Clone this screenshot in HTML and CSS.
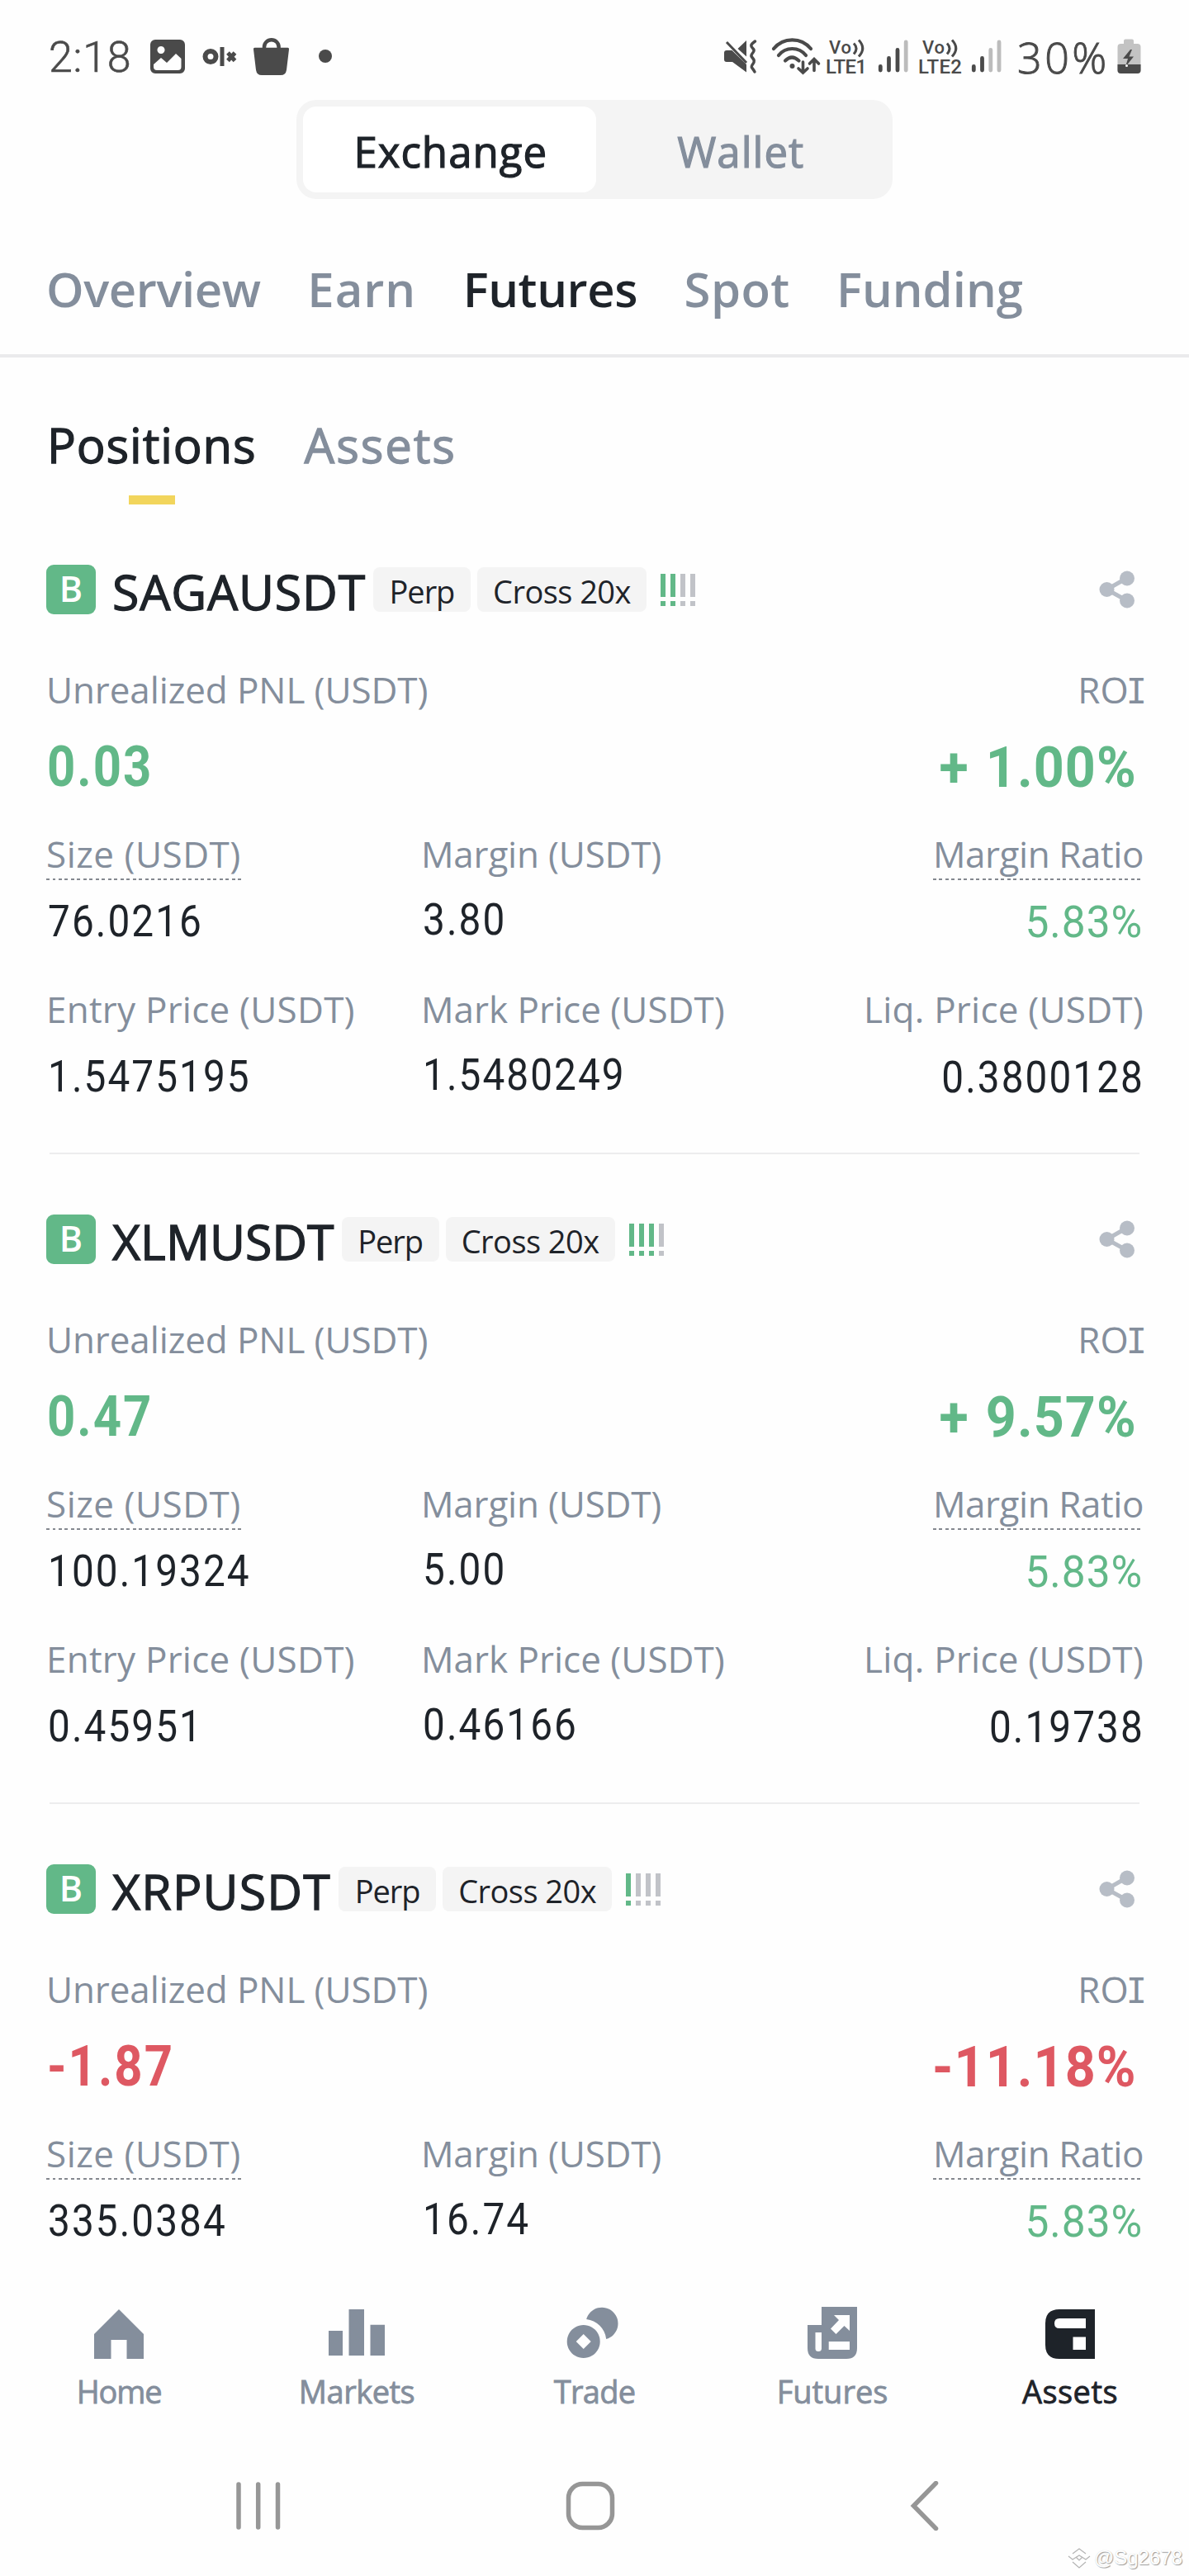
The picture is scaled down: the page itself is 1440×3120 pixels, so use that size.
FILE: index.html
```html
<!DOCTYPE html>
<html lang="en">
<head>
<meta charset="utf-8">
<title>Futures positions</title>
<link rel="stylesheet" href="styles.css">
</head>
<body>
<svg class="defs" aria-hidden="true">
  <symbol id="share" viewBox="0 0 44 46">
    <path d="M34 9L9.500 23L34 36.500" fill="none" stroke="#b7bdc6" stroke-width="5"/>
    <circle cx="9.500" cy="23" r="9"/><circle cx="34" cy="9.500" r="9"/><circle cx="34" cy="36.500" r="9"/>
  </symbol>
</svg>
<div class="screen">
  <header class="status">
    <span class="clock">2:18</span>
    <svg class="status-left" viewBox="180 41 230 56">
      <path fill-rule="evenodd" d="M188 48h30a6 6 0 0 1 6 6v29a6 6 0 0 1-6 6h-30a6 6 0 0 1-6-6V54a6 6 0 0 1 6-6zM195 56a4.500 4.500 0 1 0 .01 0zM186 78l9-8 7 6 11-11 6.500 6v10a4 4 0 0 1-4 4H190a4 4 0 0 1-4-4z"/>
      <circle cx="255" cy="68.500" r="6.500" fill="none" stroke="#4a4a4a" stroke-width="6"/>
      <path d="M266.500 57h5v23h-5z"/>
      <path d="M276 64l8.500 9.500M284.500 64l-8.500 9.500" fill="none" stroke="#4a4a4a" stroke-width="5"/>
      <path d="M308.500 57.700h40q1.800 0 1.500 2l-3 25q-1 6.300-7 6.300h-23q-6 0-7-6.300l-3-25q-.3-2 1.500-2z"/>
      <path d="M320 60v-3a8.800 8.800 0 0 1 17.600 0v3" fill="none" stroke="#4a4a4a" stroke-width="4.500"/>
      <circle cx="394" cy="68" r="8"/>
    </svg>
    <svg class="status-right" viewBox="870 41 350 56">
      <path d="M880 61h6.500L904 78v9.500L887 75h-7q-3 0-3-3v-8q0-3 3-3zM893.500 59L904 49v19.500z"/>
      <path d="M880 51l24 25" fill="none" stroke="#4a4a4a" stroke-width="3"/>
      <path d="M914.500 50c-7 5-5 6-2 9.500s-5 6-2 9.500 4 5 1 9 0 4 2.500 9" fill="none" stroke="#4a4a4a" stroke-width="3.500" stroke-linecap="round"/>
      <g fill="none" stroke="#4a4a4a" stroke-width="4.200" stroke-linecap="round">
        <path d="M937 59a29 29 0 0 1 45 0M943 67a21 21 0 0 1 33 0M951 73.500q8-8 16.500 0"/>
        <path stroke-width="3.600" d="M972.500 75v12.500M967 83l5.500 5 5.500-5M986 72v13.500M980.500 77l5.500-5.500 5.500 5.500"/>
      </g>
      <circle cx="959.500" cy="80" r="3"/>
      <g class="volte">
        <text x="1004" y="65" textLength="27" font-size="22">Vo</text>
        <text x="1000" y="89" textLength="50" font-size="24">LTE1</text>
        <text x="1117" y="65" textLength="27" font-size="22">Vo</text>
        <text x="1112" y="89" textLength="53" font-size="24">LTE2</text>
      </g>
      <path d="M1034 52.500q6 6 0 13M1040 48.500q9.500 10 0 20M1147 52.500q6 6 0 13M1153 48.500q9.500 10 0 20" fill="none" stroke="#4a4a4a" stroke-width="3"/>
      <g stroke="#4a4a4a" stroke-width="4.800" stroke-linecap="round">
        <path d="M1066.300 80.500v4.500M1076.500 70.500v14.500M1087 60.500v24.500"/>
        <path d="M1179.300 80.500v4.500M1189.500 70.500v14.500"/>
        <path stroke="#bcbcbc" d="M1097.200 51v34M1199.800 60.500v24.500M1210 51v34"/>
      </g>
    </svg>
    <span class="charge">30%</span>
    <svg class="battery" viewBox="1350 41 34 56">
      <path fill="#c3c3c3" d="M1363 47.500h8q2 0 2 2V53h4.500q4 0 4 4v28q0 4-4 4h-20q-4 0-4-4V57q0-4 4-4h3.500v-3.500q0-2 2-2z"/>
      <path d="M1353.500 78h28v7q0 4-4 4h-20q-4 0-4-4z"/>
      <path d="M1369 60l-9 11h6l-3 10 10-12.500h-5.500l3.500-8.500z"/>
      <circle cx="1364.500" cy="79.500" r="1.500" fill="#fff"/>
    </svg>
  </header>

  <div class="segment">
    <span class="segment-item is-on">Exchange</span>
    <span class="segment-item wallet">Wallet</span>
  </div>

  <nav class="tabs">
    <span class="tab overview">Overview</span>
    <span class="tab earn">Earn</span>
    <span class="tab futures is-on">Futures</span>
    <span class="tab spot">Spot</span>
    <span class="tab">Funding</span>
  </nav>

  <nav class="subtabs">
    <span class="subtab is-on">Positions</span>
    <span class="subtab assets">Assets</span>
  </nav>

  <main class="list">
    <section class="card">
      <div class="head">
        <span class="badge">B</span>
        <span class="name saga">SAGAUSDT</span>
        <span class="pill perp">Perp</span>
        <span class="pill cross">Cross 20x</span>
        <svg class="risk" viewBox="0 0 42 39"><path fill="#62b888" d="M0 0h6v28H0zM0 33h6v6H0zM12 0h6v28h-6zM12 33h6v6h-6z"/><path d="M24 0h6v28h-6zM24 33h6v6h-6zM36 0h6v28h-6zM36 33h6v6h-6z"/></svg>
        <svg class="share"><use href="#share"/></svg>
      </div>
      <div class="pnl">
        <div><div class="label unreal">Unrealized PNL (USDT)</div><div class="big">0.03</div></div>
        <div class="end"><div class="label roi">RO<span class="slab">I</span></div><div class="big pct"><span class="plus">+</span>1.00%</div></div>
      </div>
      <div class="grid">
        <div><div class="label dotted size">Size (USDT)</div><div class="value">76.0216</div></div>
        <div class="mid"><div class="label margin">Margin (USDT)</div><div class="value">3.80</div></div>
        <div class="end"><div class="label dotted ratio">Margin Ratio</div><div class="value up">5.83%</div></div>
        <div><div class="label entry">Entry Price (USDT)</div><div class="value">1.5475195</div></div>
        <div class="mid"><div class="label">Mark Price (USDT)</div><div class="value">1.5480249</div></div>
        <div class="end"><div class="label entry">Liq. Price (USDT)</div><div class="value">0.3800128</div></div>
      </div>
    </section>

    <section class="card">
      <div class="head">
        <span class="badge">B</span>
        <span class="name">XLMUSDT</span>
        <span class="pill perp">Perp</span>
        <span class="pill cross">Cross 20x</span>
        <svg class="risk" viewBox="0 0 42 39"><path fill="#62b888" d="M0 0h6v28H0zM0 33h6v6H0zM12 0h6v28h-6zM12 33h6v6h-6zM24 0h6v28h-6zM24 33h6v6h-6z"/><path d="M36 0h6v28h-6zM36 33h6v6h-6z"/></svg>
        <svg class="share"><use href="#share"/></svg>
      </div>
      <div class="pnl">
        <div><div class="label unreal">Unrealized PNL (USDT)</div><div class="big">0.47</div></div>
        <div class="end"><div class="label roi">RO<span class="slab">I</span></div><div class="big pct"><span class="plus">+</span>9.57%</div></div>
      </div>
      <div class="grid">
        <div><div class="label dotted size">Size (USDT)</div><div class="value">100.19324</div></div>
        <div class="mid"><div class="label margin">Margin (USDT)</div><div class="value">5.00</div></div>
        <div class="end"><div class="label dotted ratio">Margin Ratio</div><div class="value up">5.83%</div></div>
        <div><div class="label entry">Entry Price (USDT)</div><div class="value">0.45951</div></div>
        <div class="mid"><div class="label">Mark Price (USDT)</div><div class="value">0.46166</div></div>
        <div class="end"><div class="label entry">Liq. Price (USDT)</div><div class="value">0.19738</div></div>
      </div>
    </section>

    <section class="card last">
      <div class="head">
        <span class="badge">B</span>
        <span class="name xrp">XRPUSDT</span>
        <span class="pill perp">Perp</span>
        <span class="pill cross">Cross 20x</span>
        <svg class="risk" viewBox="0 0 42 39"><path fill="#62b888" d="M0 0h6v28H0zM0 33h6v6H0z"/><path d="M12 0h6v28h-6zM12 33h6v6h-6zM24 0h6v28h-6zM24 33h6v6h-6zM36 0h6v28h-6zM36 33h6v6h-6z"/></svg>
        <svg class="share"><use href="#share"/></svg>
      </div>
      <div class="pnl">
        <div><div class="label unreal">Unrealized PNL (USDT)</div><div class="big down">-1.87</div></div>
        <div class="end"><div class="label roi">RO<span class="slab">I</span></div><div class="big pct down">-11.18%</div></div>
      </div>
      <div class="grid">
        <div><div class="label dotted size">Size (USDT)</div><div class="value">335.0384</div></div>
        <div class="mid"><div class="label margin">Margin (USDT)</div><div class="value">16.74</div></div>
        <div class="end"><div class="label dotted ratio">Margin Ratio</div><div class="value up">5.83%</div></div>
      </div>
    </section>
  </main>

  <nav class="bottom">
    <div class="item home"><svg viewBox="0 0 72 72"><path d="M36 8L66 38v30H45.500V45H26.500v23H6V38z"/></svg><span>Home</span></div>
    <div class="item markets"><svg viewBox="0 0 72 72"><path d="M2 34h17v30H2zM26.500 8H45v56H26.500zM52.500 26.700H70V64H52.500z"/></svg><span>Markets</span></div>
    <div class="item trade"><svg viewBox="0 0 72 72"><path fill-rule="evenodd" d="M22.700 27a20 20 0 1 0 .01 0zM22.700 38l9 9-9 9-9-9z"/><path d="M26.200 20A19.500 19.500 0 1 1 50.200 44A27.500 27.500 0 0 0 26.200 20z"/></svg><span>Trade</span></div>
    <div class="item"><svg viewBox="0 0 72 72"><path fill-rule="evenodd" d="M23 5h43v50q0 13-13 13H19Q6 68 6 55V27h17zM15.500 36v19.500q0 3.500 3.700 3.500t3.800-3.500V36zM31.700 47v10H57V47zM38 15l6 6-10 10.500 6.500 6.500L50.500 28l6.500 6V15z"/></svg><span>Futures</span></div>
    <div class="item is-on"><svg viewBox="0 0 72 72"><path fill-rule="evenodd" d="M23 8h43v60H23Q6 68 6 51V25Q6 8 23 8zM23 19q-6 0-6 6t6 6h32V19zM39.500 41.500V57H55V41.500z"/></svg><span>Assets</span></div>
  </nav>

  <div class="system">
    <svg class="recents" viewBox="0 0 54 60"><path d="M3 4v52M26.700 4v52M50.500 4v52"/></svg>
    <svg class="homekey" viewBox="0 0 60 60"><rect x="3.500" y="3.500" width="53" height="53" rx="17"/></svg>
    <svg class="back" viewBox="0 0 36 60"><path d="M31.500 2.500L4.500 30l27 27.500"/></svg>
  </div>

  <div class="mark">
    <svg viewBox="0 0 28 25"><path d="M6 7l8-6 8 6M1 10l5 4 8-5 8 5 5-4M6 17l8 7 8-7M10 11l4 4 4-4"/></svg>
    <span>@Sg2678</span>
  </div>
</div>
</body>
</html>
```
FILE: styles.css
```css
* { box-sizing: border-box; }
body {
  margin: 0;
  background: #fefefe;
  color: #1e2329;
  font-family: "Open Sans", "Noto Sans", sans-serif;
}
svg { display: block; flex: none; }
.defs { position: absolute; width: 0; height: 0; }
.screen {
  position: relative;
  width: 1440px;
  height: 3120px;
  display: flex;
  flex-direction: column;
  overflow: hidden;
  white-space: nowrap;
}

/* status bar */
.status {
  height: 121px;
  padding: 17px 56px 0 59px;
  display: flex;
  align-items: center;
  color: #4a4a4a;
  fill: #4a4a4a;
}
.clock { width: 121px; font: 300 52px Roboto, sans-serif; letter-spacing: .7px; -webkit-text-stroke: .6px; }
.status-left { width: 230px; height: 56px; }
.status-right { width: 350px; height: 56px; margin-left: auto; }
.volte { font-family: Roboto, sans-serif; font-weight: 500; }
.charge {
  width: 130px;
  padding-left: 12px;
  font: 300 52px/56px "Open Sans", sans-serif;
  letter-spacing: 3.500px;
  -webkit-text-stroke: 1px;
}
.battery { width: 34px; height: 56px; }

/* exchange / wallet switch */
.segment {
  width: 722px;
  height: 120px;
  margin: 0 auto;
  padding: 8px;
  display: flex;
  border-radius: 24px;
  background: #f4f4f4;
}
.segment-item {
  flex: 1;
  height: 104px;
  padding-top: 4px;
  border-radius: 16px;
  text-align: center;
  font-size: 51px;
  font-weight: 500;
  line-height: 100px;
  letter-spacing: 1px;
  -webkit-text-stroke: 1.200px;
  color: #848e9c;
}
.segment-item.is-on { background: #fff; color: #1e2329; padding-left: 3px; }

/* tabs */
.tabs {
  height: 192px;
  padding: 69px 56px 0;
  display: flex;
  gap: 56.500px;
  border-bottom: 4px solid #eaeaec;
}
.tab { font-size: 58px; font-weight: 600; line-height: 80px; color: #848e9c; }
.tab.is-on, .subtab.is-on { color: #1e2329; }
.overview { letter-spacing: -.4px; }
.earn { letter-spacing: 1px; }
.futures { letter-spacing: -.4px; }
.spot { letter-spacing: .4px; }

.subtabs { height: 178px; padding: 66px 57px 0; display: flex; gap: 58px; }
.subtab {
  display: flex;
  flex-direction: column;
  align-items: center;
  font-size: 58px;
  font-weight: 500;
  line-height: 80px;
  letter-spacing: .9px;
  -webkit-text-stroke: 1.300px;
  color: #848e9c;
}
.subtab.assets { letter-spacing: 1.900px; }
.subtab.is-on::after { content: ""; width: 56px; height: 11px; margin-top: 21px; background: #f2d55c; }

/* positions */
.list { flex: 1; padding: 0 56px; overflow: hidden; }
.card { height: 787px; padding-top: 73px; background: linear-gradient(#ededee, #ededee) center bottom / 1320px 2px no-repeat; }
.card.last { background: none; }
.head { height: 60px; display: flex; align-items: center; }
.badge {
  width: 60px;
  height: 60px;
  border-radius: 9px;
  background: #62b888;
  color: #fff;
  text-align: center;
  font-size: 43px;
  font-weight: 600;
  line-height: 58px;
}
.name {
  margin: 4px 9px 0 20px;
  font-size: 59px;
  font-weight: 500;
  line-height: 60px;
  -webkit-text-stroke: 1.300px;
}
.saga { letter-spacing: .8px; }
.xrp { letter-spacing: 1.200px; }
.pill {
  height: 54px;
  padding-top: 2px;
  border-radius: 8px;
  background: #f4f4f4;
  text-align: center;
  font-size: 38px;
  line-height: 54px;
}
.perp { width: 118px; letter-spacing: -1.050px; }
.cross { width: 205px; margin: 0 17px 0 8px; letter-spacing: -.55px; }
.risk { width: 42px; height: 39px; fill: #c1c3c8; }
.share { width: 44px; height: 46px; margin: 0 9px 0 auto; fill: #b7bdc6; }

.pnl { margin-top: 61px; display: flex; justify-content: space-between; }
.grid {
  margin-top: 35px;
  display: grid;
  grid-template-columns: 454px 1fr auto;
  row-gap: 45px;
}
.end { display: flex; flex-direction: column; align-items: flex-end; }
.label { width: fit-content; height: 60px; font-size: 44px; line-height: 60px; color: #848e9c; }
.end .label { margin-right: -1px; }
.dotted {
  height: 62px;
  margin-bottom: -2px;
  background: repeating-linear-gradient(90deg, #84888f 0 4px, transparent 4px 7.500px) left bottom / 100% 2px no-repeat;
}
.unreal { letter-spacing: -.1px; }
.roi { letter-spacing: 0; }
.slab { font-family: "DejaVu Sans Mono", monospace; font-size: 42px; margin: 0 -4px 0 -3px; }
.size { letter-spacing: .5px; }
.margin { letter-spacing: -.2px; }
.ratio { letter-spacing: -.43px; }
.entry { letter-spacing: .23px; }

.big {
  width: fit-content;
  height: 80px;
  margin: 24px 0 0 1px;
  font: 700 68px/80px Roboto, sans-serif;
  letter-spacing: 2.300px;
  color: #62b888;
  transform: scaleX(.88);
  transform-origin: left;
}
.pct { margin: 25px 7px -1px 0; letter-spacing: 1.100px; transform: scaleX(.95); transform-origin: right; }
.plus { margin-right: 21px; }
.big.down { color: #de5862; }
.value {
  width: fit-content;
  height: 60px;
  margin: 22px 0 0 2px;
  font: 400 53px/60px Roboto, sans-serif;
  letter-spacing: 2.300px;
  transform: scaleX(.9);
  transform-origin: left;
}
.mid .value { margin-top: 20px; }
.end .value { margin: 23px -2px 0 0; transform-origin: right; }
.end .value.up { margin-right: 0; letter-spacing: 1px; color: #62b888; transform: scaleX(.97); }

/* app navigation */
.bottom { height: 200px; padding-top: 29px; display: flex; }
.item {
  flex: 1;
  display: flex;
  flex-direction: column;
  align-items: center;
  gap: 15px;
  font-size: 38px;
  font-weight: 500;
  line-height: 40px;
  color: #848e9c;
  fill: #848e9c;
}
.item span { -webkit-text-stroke: .8px; }
.item.is-on { color: #1e2329; fill: #1e2329; letter-spacing: .5px; }
.item svg { width: 72px; height: 72px; }
.home { letter-spacing: -1.200px; }
.markets { letter-spacing: -.5px; }
.trade { letter-spacing: -.7px; }

/* device navigation */
.system {
  height: 160px;
  padding: 0 302px 11px 286px;
  display: flex;
  align-items: center;
  fill: none;
  stroke: #969696;
  stroke-width: 5.500px;
  stroke-linecap: round;
}
.recents { width: 54px; height: 60px; }
.homekey { width: 60px; height: 60px; margin-left: 344.500px; }
.back { width: 36px; height: 60px; margin-left: auto; }

.mark {
  position: absolute;
  right: 8px;
  bottom: 8px;
  display: flex;
  align-items: center;
  gap: 4px;
  color: #fff;
  font: 24px/28px "Liberation Sans", Arial, sans-serif;
  text-shadow: 1px 1px 1px #9a9a9a, 0 0 1px #cfcfcf;
}
.mark svg { width: 28px; height: 25px; fill: none; stroke: #b4b4b4; stroke-width: 1.200px; }
```
